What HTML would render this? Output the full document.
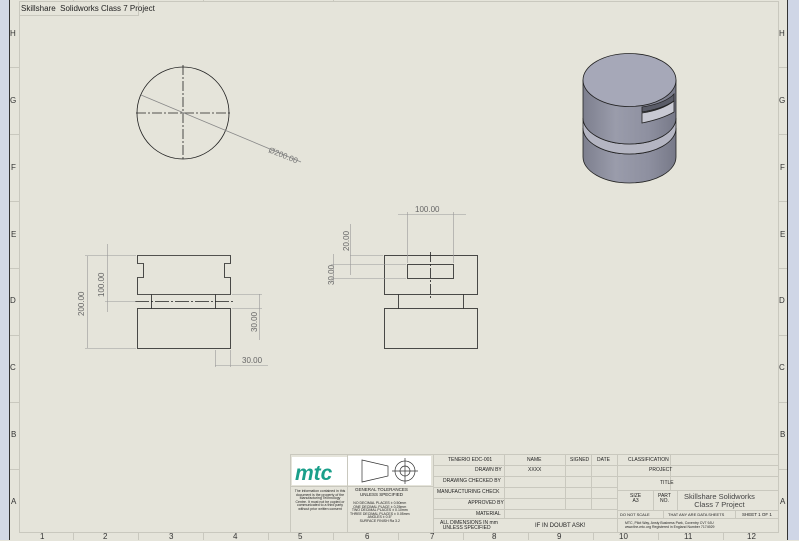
<!DOCTYPE html>
<html><head><meta charset="utf-8"><style>
body{margin:0;width:799px;height:540px;overflow:hidden;background:#e5e4da;font-family:"Liberation Sans",sans-serif;position:relative}
.a{position:absolute}
.t{position:absolute;font-size:5px;color:#222;white-space:nowrap;line-height:1}
.lab{position:absolute;font-size:8px;color:#333}
</style></head><body>
<div class="a" style="left:0;top:0;width:9px;height:540px;background:#d3d9e6"></div>
<div class="a" style="left:9px;top:0;width:1px;height:540px;background:#333"></div>
<div class="a" style="left:788px;top:0;width:11px;height:540px;background:#cfd6e6"></div>
<div class="a" style="left:787px;top:0;width:1px;height:540px;background:#333"></div>
<svg class="a" style="left:0;top:0" width="799" height="540">
<g stroke="#c9c8be" stroke-width="1" fill="none">
<rect x="19.5" y="1.5" width="759" height="531"/>
<line x1="10" y1="67.5" x2="19" y2="67.5"/><line x1="10" y1="134.5" x2="19" y2="134.5"/><line x1="10" y1="201.5" x2="19" y2="201.5"/><line x1="10" y1="268.5" x2="19" y2="268.5"/><line x1="10" y1="335.5" x2="19" y2="335.5"/><line x1="10" y1="402.5" x2="19" y2="402.5"/><line x1="10" y1="469.5" x2="19" y2="469.5"/>
<line x1="779" y1="67.5" x2="787" y2="67.5"/><line x1="779" y1="134.5" x2="787" y2="134.5"/><line x1="779" y1="201.5" x2="787" y2="201.5"/><line x1="779" y1="268.5" x2="787" y2="268.5"/><line x1="779" y1="335.5" x2="787" y2="335.5"/><line x1="779" y1="402.5" x2="787" y2="402.5"/><line x1="779" y1="469.5" x2="787" y2="469.5"/>
<line x1="73.5" y1="533" x2="73.5" y2="540"/><line x1="138.5" y1="533" x2="138.5" y2="540"/><line x1="203.5" y1="533" x2="203.5" y2="540"/><line x1="268.5" y1="533" x2="268.5" y2="540"/><line x1="333.5" y1="533" x2="333.5" y2="540"/><line x1="398.5" y1="533" x2="398.5" y2="540"/><line x1="463.5" y1="533" x2="463.5" y2="540"/><line x1="528.5" y1="533" x2="528.5" y2="540"/><line x1="593.5" y1="533" x2="593.5" y2="540"/><line x1="658.5" y1="533" x2="658.5" y2="540"/><line x1="723.5" y1="533" x2="723.5" y2="540"/>
<line x1="73.5" y1="0" x2="73.5" y2="1"/><line x1="203.5" y1="0" x2="203.5" y2="1"/><line x1="333.5" y1="0" x2="333.5" y2="1"/>
<rect x="19.5" y="1.5" width="119" height="14"/>
</g>
<g stroke="#222" fill="none" stroke-width="0.8">
<circle cx="183" cy="113" r="46"/>
<line x1="136" y1="113" x2="231" y2="113" stroke-dasharray="10,2,2,2"/>
<line x1="183" y1="65" x2="183" y2="160" stroke-dasharray="10,2,2,2"/>
</g>
<line x1="141" y1="95" x2="301" y2="162" stroke="#888" stroke-width="0.8"/>
<text x="268" y="152" font-size="8" fill="#777" transform="rotate(22 268 152)" font-family="Liberation Sans">Ø200.00</text>
<g stroke="#222" fill="none" stroke-width="0.8">
<path d="M137.5 255.5 H230.5 V263.5 H224.5 V277.5 H230.5 V294.5 H137.5 V277.5 H143.5 V263.5 H137.5 Z"/>
<rect x="137.5" y="308.5" width="93" height="40"/>
<line x1="151.5" y1="294.5" x2="151.5" y2="308.5"/><line x1="215.5" y1="294.5" x2="215.5" y2="308.5"/>
<line x1="135" y1="301.5" x2="233" y2="301.5" stroke-dasharray="14,2,2,2"/>
</g>
<g stroke="#999" fill="none" stroke-width="0.6">
<line x1="85" y1="255.5" x2="136" y2="255.5"/><line x1="85" y1="348.5" x2="136" y2="348.5"/>
<line x1="87.5" y1="256" x2="87.5" y2="348"/>
<line x1="107.5" y1="244" x2="107.5" y2="312"/><line x1="105" y1="301.5" x2="136" y2="301.5"/>
<line x1="232" y1="294.5" x2="262" y2="294.5"/><line x1="232" y1="308.5" x2="262" y2="308.5"/>
<line x1="259.5" y1="294" x2="259.5" y2="340"/>
<line x1="215.5" y1="350" x2="215.5" y2="367"/><line x1="230.5" y1="350" x2="230.5" y2="367"/>
<line x1="215" y1="365.5" x2="268" y2="365.5"/>
</g>
<g font-family="Liberation Sans" font-size="8" fill="#666">
<text x="0" y="0" transform="translate(84 316) rotate(-90)">200.00</text>
<text x="0" y="0" transform="translate(104 297) rotate(-90)">100.00</text>
<text x="0" y="0" transform="translate(257 332) rotate(-90)">30.00</text>
<text x="242" y="363">30.00</text>
<text x="415" y="212">100.00</text>
<text x="0" y="0" transform="translate(349 251) rotate(-90)">20.00</text>
<text x="0" y="0" transform="translate(334 285) rotate(-90)">30.00</text>
</g>
<g stroke="#222" fill="none" stroke-width="0.8">
<rect x="384.5" y="255.5" width="93" height="39"/>
<rect x="407.5" y="264.5" width="46" height="14"/>
<rect x="384.5" y="308.5" width="93" height="40"/>
<line x1="398.5" y1="294.5" x2="398.5" y2="308.5"/><line x1="463.5" y1="294.5" x2="463.5" y2="308.5"/>
<line x1="430.5" y1="252" x2="430.5" y2="298" stroke-dasharray="10,2,2,2"/>
</g>
<g stroke="#999" fill="none" stroke-width="0.6">
<line x1="407.5" y1="212" x2="407.5" y2="263"/><line x1="453.5" y1="212" x2="453.5" y2="263"/>
<line x1="398" y1="214.5" x2="466" y2="214.5"/>
<line x1="350" y1="255.5" x2="383" y2="255.5"/><line x1="331" y1="264.5" x2="406" y2="264.5"/><line x1="331" y1="278.5" x2="406" y2="278.5"/>
<line x1="350.5" y1="224" x2="350.5" y2="275"/><line x1="333.5" y1="254" x2="333.5" y2="282"/>
</g>
<defs><linearGradient id="g" x1="0" x2="1"><stop offset="0" stop-color="#7d7f8e"/><stop offset="0.35" stop-color="#9a9cab"/><stop offset="0.7" stop-color="#8e90a0"/><stop offset="1" stop-color="#777988"/></linearGradient></defs>
<g stroke="#222" stroke-width="0.8">
<path d="M583 128 V157 A46.5 26 0 0 0 676 157 V128 A46.5 26 0 0 1 583 128 Z" fill="url(#g)"/>
<path d="M583 118 A46.5 26 0 0 0 676 118 V128 A46.5 26 0 0 1 583 128 Z" fill="#b4b5c2"/>
<path d="M583 80 V118 A46.5 26 0 0 0 676 118 V80 Z" fill="url(#g)"/>
<ellipse cx="629.5" cy="80" rx="46.5" ry="26.5" fill="#a6a8b8"/>
<path d="M642 112 Q662 109 674 101 V94 L672 96 Q662 104 642 107 Z" fill="#5a5c68"/>
<path d="M642 113 Q662 110 674 101 V112 Q662 119 642 123 Z" fill="#c8c9d3"/>
</g>
</svg>
<div class="t" style="left:21px;top:5px;font-size:8px;color:#222">Skillshare&nbsp; Solidworks Class 7 Project</div>
<div class="lab" style="left:10px;top:29px">H</div><div class="lab" style="left:10px;top:96px">G</div><div class="lab" style="left:11px;top:163px">F</div><div class="lab" style="left:11px;top:230px">E</div><div class="lab" style="left:10px;top:296px">D</div><div class="lab" style="left:10px;top:363px">C</div><div class="lab" style="left:11px;top:430px">B</div><div class="lab" style="left:11px;top:497px">A</div>
<div class="lab" style="left:779px;top:29px">H</div><div class="lab" style="left:779px;top:96px">G</div><div class="lab" style="left:780px;top:163px">F</div><div class="lab" style="left:780px;top:230px">E</div><div class="lab" style="left:779px;top:296px">D</div><div class="lab" style="left:779px;top:363px">C</div><div class="lab" style="left:780px;top:430px">B</div><div class="lab" style="left:780px;top:497px">A</div>
<div class="lab" style="left:40px;top:532px">1</div><div class="lab" style="left:103px;top:532px">2</div><div class="lab" style="left:169px;top:532px">3</div><div class="lab" style="left:233px;top:532px">4</div><div class="lab" style="left:298px;top:532px">5</div><div class="lab" style="left:365px;top:532px">6</div><div class="lab" style="left:430px;top:532px">7</div><div class="lab" style="left:492px;top:532px">8</div><div class="lab" style="left:557px;top:532px">9</div><div class="lab" style="left:619px;top:532px">10</div><div class="lab" style="left:684px;top:532px">11</div><div class="lab" style="left:747px;top:532px">12</div>
<svg class="a" style="left:0;top:0" width="799" height="540">
<rect x="292" y="457" width="55" height="28" fill="#fff"/>
<rect x="348" y="456" width="83" height="29" fill="#fff"/>
<text x="295" y="480" font-family="Liberation Sans" font-size="21" font-weight="bold" font-style="italic" fill="#1a9f8a">mtc</text>
<g stroke="#333" fill="none" stroke-width="0.7">
<path d="M362 460 L388 466 V476 L362 482 Z"/><circle cx="405" cy="471" r="10"/><circle cx="405" cy="471" r="5"/><line x1="405" y1="458" x2="405" y2="484"/><line x1="392" y1="471" x2="418" y2="471"/>
</g>
<g stroke="#c9c8be" fill="none" stroke-width="1">
<rect x="290.5" y="454.5" width="488" height="78"/>
<line x1="290" y1="486.5" x2="433" y2="486.5"/>
<line x1="347.5" y1="455" x2="347.5" y2="532"/>
<line x1="433.5" y1="455" x2="433.5" y2="532"/>
<line x1="504.5" y1="455" x2="504.5" y2="519"/>
<line x1="565.5" y1="455" x2="565.5" y2="510"/><line x1="591.5" y1="455" x2="591.5" y2="510"/>
<line x1="617.5" y1="455" x2="617.5" y2="532"/>
<line x1="433" y1="465.5" x2="617" y2="465.5"/><line x1="433" y1="476.5" x2="617" y2="476.5"/><line x1="433" y1="487.5" x2="617" y2="487.5"/><line x1="433" y1="498.5" x2="617" y2="498.5"/><line x1="433" y1="509.5" x2="617" y2="509.5"/><line x1="433" y1="518.5" x2="778" y2="518.5"/>
<line x1="617" y1="465.5" x2="778" y2="465.5"/><line x1="617" y1="476.5" x2="778" y2="476.5"/><line x1="617" y1="490.5" x2="778" y2="490.5"/><line x1="617" y1="510.5" x2="778" y2="510.5"/>
<line x1="670.5" y1="455" x2="670.5" y2="490"/><line x1="653.5" y1="490" x2="653.5" y2="510"/><line x1="677.5" y1="490" x2="677.5" y2="510"/>
<line x1="663.5" y1="510" x2="663.5" y2="518"/><line x1="735.5" y1="510" x2="735.5" y2="518"/>
</g>
</svg>
<div class="t" style="left:448px;top:458px">TENERIO EDC-001</div>
<div class="t" style="left:527px;top:458px">NAME</div><div class="t" style="left:570px;top:458px">SIGNED</div><div class="t" style="left:597px;top:458px">DATE</div>
<div class="t" style="left:475px;top:468px">DRAWN BY</div><div class="t" style="left:528px;top:468px">XXXX</div>
<div class="t" style="left:443px;top:479px">DRAWING CHECKED BY</div>
<div class="t" style="left:437px;top:490px">MANUFACTURING CHECK</div>
<div class="t" style="left:468px;top:501px">APPROVED BY</div>
<div class="t" style="left:476px;top:512px">MATERIAL</div>
<div class="t" style="left:440px;top:521px">ALL DIMENSIONS IN mm<br>&nbsp;&nbsp;UNLESS SPECIFIED</div>
<div class="t" style="left:535px;top:523px;font-size:6px">IF IN DOUBT ASK!</div>
<div class="t" style="left:628px;top:458px">CLASSIFICATION</div>
<div class="t" style="left:649px;top:468px">PROJECT</div>
<div class="t" style="left:660px;top:481px">TITLE</div>
<div class="t" style="left:630px;top:494px;text-align:center">SIZE<br>A3</div>
<div class="t" style="left:658px;top:494px;text-align:center">PART<br>NO.</div>
<div class="t" style="left:684px;top:493px;font-size:7.5px;color:#444;text-align:center">Skillshare Solidworks<br>Class 7 Project</div>
<div class="t" style="left:620px;top:513px;font-size:4px">DO NOT SCALE</div>
<div class="t" style="left:668px;top:513px;font-size:4px">THAT ANY ARE DATA SHEETS</div>
<div class="t" style="left:742px;top:513px;font-size:4.5px">SHEET 1 OF 1</div>
<div class="t" style="left:625px;top:522px;font-size:3.5px">MTC, Pilot Way, Ansty Business Park, Coventry CV7 9JU<br>www.the-mtc.org Registered in England Number 7174929</div>
<div class="t" style="left:294px;top:490px;font-size:3.5px;text-align:center;width:52px;white-space:normal">The information contained in this document is the property of the Manufacturing Technology Centre. It must not be copied or communicated to a third party without prior written consent</div>
<div class="t" style="left:355px;top:488px;font-size:4.5px;text-align:center">GENERAL TOLERANCES<br>UNLESS SPECIFIED</div>
<div class="t" style="left:350px;top:502px;font-size:3.5px;text-align:center">NO DECIMAL PLACES ± 0.50mm<br>ONE DECIMAL PLACE ± 0.25mm<br>TWO DECIMAL PLACES ± 0.10mm<br>THREE DECIMAL PLACES ± 0.05mm<br>ANGLES ± 0.5°<br>SURFACE FINISH Ra 3.2</div>
</body></html>
